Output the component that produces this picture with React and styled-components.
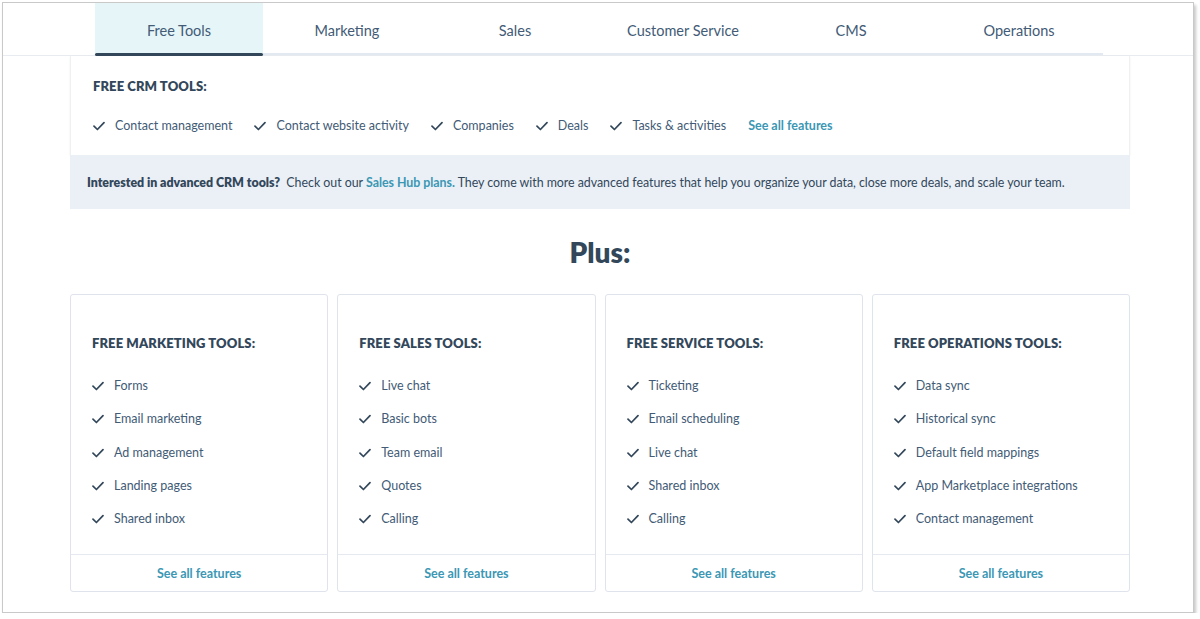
import styled, { createGlobalStyle } from 'styled-components';

const GlobalStyle = createGlobalStyle`
  html, body {
    margin: 0;
    padding: 0;
    background: #ffffff;
  }
  body {
    font-family: Lato, "Noto Sans", "Liberation Sans", sans-serif;
    color: #33475b;
    -webkit-font-smoothing: antialiased;
  }
`;

const tabs = ['Free Tools', 'Marketing', 'Sales', 'Customer Service', 'CMS', 'Operations'];

const crmItems = [
  'Contact management',
  'Contact website activity',
  'Companies',
  'Deals',
  'Tasks & activities',
];

const cards = [
  {
    title: 'FREE MARKETING TOOLS:',
    items: ['Forms', 'Email marketing', 'Ad management', 'Landing pages', 'Shared inbox'],
  },
  {
    title: 'FREE SALES TOOLS:',
    items: ['Live chat', 'Basic bots', 'Team email', 'Quotes', 'Calling'],
  },
  {
    title: 'FREE SERVICE TOOLS:',
    items: ['Ticketing', 'Email scheduling', 'Live chat', 'Shared inbox', 'Calling'],
  },
  {
    title: 'FREE OPERATIONS TOOLS:',
    items: [
      'Data sync',
      'Historical sync',
      'Default field mappings',
      'App Marketplace integrations',
      'Contact management',
    ],
  },
];

function Check() {
  return (
    <CheckIcon viewBox="0 0 12 10" aria-hidden="true">
      <path d="M1 5.2 L4.4 8.5 L11 1.6" fill="none" stroke="#33475b" strokeWidth="1.7" strokeLinecap="round" strokeLinejoin="round" />
    </CheckIcon>
  );
}

export default function App() {
  return (
    <>
      <GlobalStyle />
      <Frame>
        <TabBar>
          <TabList>
            {tabs.map((t, i) => (
              <Tab key={t} $active={i === 0}>
                {t}
              </Tab>
            ))}
          </TabList>
        </TabBar>

        <Content>
          <CrmPanel>
            <SectionTitle>FREE CRM TOOLS:</SectionTitle>
            <CrmRow>
              {crmItems.map((item) => (
                <CrmItem key={item}>
                  <Check />
                  {item}
                </CrmItem>
              ))}
              <Link>See all features</Link>
            </CrmRow>
          </CrmPanel>

          <InfoBand>
            <strong>Interested in advanced CRM tools?</strong>
            &nbsp; Check out our&nbsp;<Link>Sales Hub plans.</Link>&nbsp;They come with more advanced
            features that help you organize your data, close more deals, and scale your team.
          </InfoBand>

          <PlusHeading>Plus:</PlusHeading>

          <CardGrid>
            {cards.map((card) => (
              <Card key={card.title}>
                <CardBody>
                  <SectionTitle>{card.title}</SectionTitle>
                  <FeatureList>
                    {card.items.map((item) => (
                      <Feature key={item}>
                        <Check />
                        {item}
                      </Feature>
                    ))}
                  </FeatureList>
                </CardBody>
                <CardFooter>
                  <Link>See all features</Link>
                </CardFooter>
              </Card>
            ))}
          </CardGrid>
        </Content>
      </Frame>
    </>
  );
}

const Frame = styled.div`
  margin: 2px 0 0 2px;
  width: 1190px;
  height: 609px;
  border: 1px solid #c9c9c9;
  box-shadow: 2px 3px 3px rgba(0, 0, 0, 0.22);
  background: #ffffff;
  overflow: hidden;
`;

const TabBar = styled.div`
  border-bottom: 1px solid #e8ebef;
`;

const TabList = styled.div`
  display: flex;
  margin-left: 92px;
  width: 1008px;
  box-shadow: inset 0 -2px 0 #e3e9f0;
`;

const Tab = styled.div`
  position: relative;
  width: 168px;
  height: 52px;
  display: flex;
  align-items: center;
  justify-content: center;
  padding-top: 3px;
  box-sizing: border-box;
  font-size: 14.5px;
  color: #425b76;
  background: ${(p) => (p.$active ? '#e5f5f8' : 'transparent')};

  &::after {
    content: '';
    display: ${(p) => (p.$active ? 'block' : 'none')};
    position: absolute;
    left: 0;
    right: 0;
    bottom: -1px;
    height: 3px;
    border-radius: 2px;
    background: #33475b;
  }
`;

const Content = styled.div`
  margin-left: 67px;
  width: 1060px;
`;

const CrmPanel = styled.div`
  padding: 22px 22px 21px;
  background: #ffffff;
  border-left: 1px solid #eef1f4;
  border-right: 1px solid #eef1f4;
  box-shadow: 0 1px 2px rgba(45, 62, 80, 0.08);
`;

const SectionTitle = styled.div`
  font-size: 13px;
  line-height: 16px;
  font-weight: 800;
  letter-spacing: 0.1px;
  color: #33475b;
`;

const CrmRow = styled.div`
  display: flex;
  align-items: center;
  margin-top: 24px;
  line-height: 16px;
  font-size: 12.5px;
  gap: 22px;
`;

const CrmItem = styled.div`
  display: flex;
  align-items: center;
  color: #425b76;
`;

const CheckIcon = styled.svg`
  width: 12px;
  height: 10px;
  margin-right: 10px;
  flex-shrink: 0;
`;

const Link = styled.span`
  color: #3b97b4;
  font-weight: 700;
`;

const InfoBand = styled.div`
  height: 54px;
  display: flex;
  align-items: center;
  padding: 0 17px;
  background: #eaf0f6;
  font-size: 12.4px;
  color: #33475b;
  white-space: nowrap;
  letter-spacing: -0.03px;

  strong {
    font-weight: 800;
  }
`;

const PlusHeading = styled.h2`
  margin: 26px 0 25px;
  text-align: center;
  font-size: 28px;
  line-height: 34px;
  font-weight: 800;
  color: #33475b;
`;

const CardGrid = styled.div`
  display: grid;
  grid-template-columns: repeat(4, 1fr);
  gap: 9px;
`;

const Card = styled.div`
  height: 298px;
  box-sizing: border-box;
  display: flex;
  flex-direction: column;
  border: 1px solid #dfe3eb;
  border-radius: 3px;
  background: #ffffff;
`;

const CardBody = styled.div`
  flex: 1;
  padding: 40px 21px 0;
`;

const FeatureList = styled.div`
  display: flex;
  flex-direction: column;
  gap: 13.3px;
  margin-top: 25px;
`;

const Feature = styled.div`
  display: flex;
  align-items: center;
  line-height: 20px;
  font-size: 12.5px;
  color: #425b76;
`;

const CardFooter = styled.div`
  height: 36px;
  display: flex;
  align-items: center;
  justify-content: center;
  border-top: 1px solid #e6eaf0;
  font-size: 12.5px;
`;
